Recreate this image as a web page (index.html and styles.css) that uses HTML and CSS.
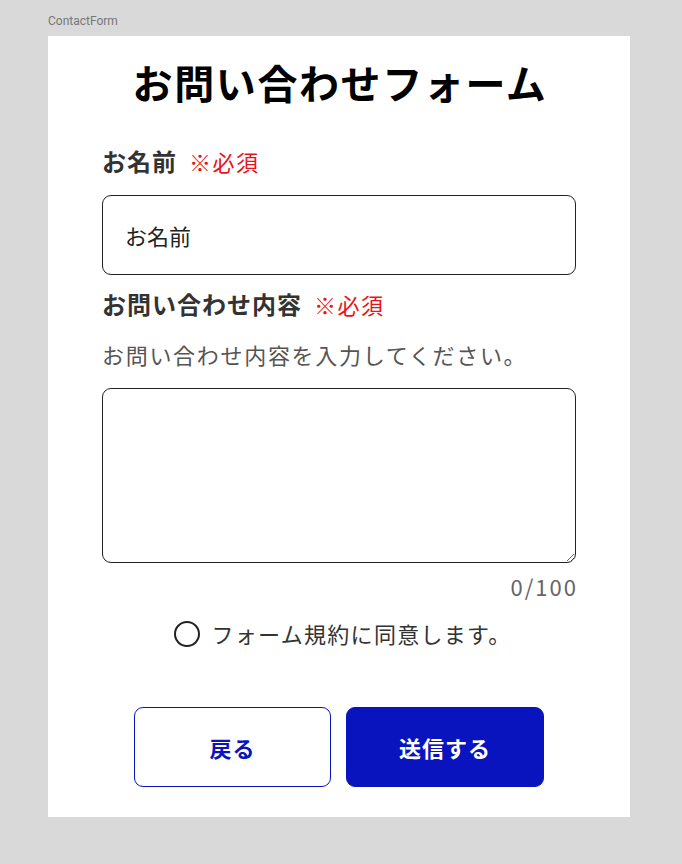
FILE: index.html
```html
<!DOCTYPE html>
<html lang="ja">
<head>
<meta charset="utf-8">
<link rel="stylesheet" href="styles.css">
</head>
<body>
<div class="frame-label">ContactForm</div>
<main class="card">
  <h1 class="title">お問い合わせフォーム</h1>
  <div class="field">
    <div class="label-row"><span class="label">お名前</span><span class="req">※必須</span></div>
    <input class="text-input" type="text" placeholder="お名前">
  </div>
  <div class="field field-2">
    <div class="label-row"><span class="label">お問い合わせ内容</span><span class="req">※必須</span></div>
    <p class="helper">お問い合わせ内容を入力してください。</p>
    <textarea class="textarea"></textarea>
    <div class="counter">0/100</div>
  </div>
  <label class="agree"><span class="radio"></span><span class="agree-text">フォーム規約に同意します。</span></label>
  <div class="buttons">
    <button class="btn btn-back" type="button">戻る</button>
    <button class="btn btn-submit" type="button">送信する</button>
  </div>
</main>
</body>
</html>
```
FILE: styles.css
```css
* { box-sizing: border-box; }
html, body { margin: 0; padding: 0; }
body {
  background: #d9d9d9;
  font-family: "Noto Sans CJK JP", "Noto Sans", sans-serif;
  padding: 14px 52px 40px 48px;
}
.frame-label {
  font-family: Roboto, "Noto Sans", sans-serif;
  font-size: 12px;
  line-height: 14px;
  color: #777;
  margin-bottom: 8px;
}
.card {
  background: #fff;
  width: 582px;
  padding: 18px 54px 30px;
  display: flex;
  flex-direction: column;
}
.title {
  margin: 0;
  font-size: 40px;
  line-height: 56px;
  font-weight: 700;
  color: #000;
  text-align: center;
  letter-spacing: 1.6px;
  padding-left: 2px;
}
.field { display: flex; flex-direction: column; margin-top: 34px; }
.field-2 { margin-top: 12px; }
.label-row { display: flex; align-items: center; gap: 12px; height: 34px; }
.label {
  font-size: 24px; line-height: 34px; font-weight: 700; color: #333; letter-spacing: 1px;
}
.req { font-size: 22px; line-height: 34px; color: #e8141c; letter-spacing: 1.5px; }
.text-input {
  margin-top: 17px;
  height: 80px;
  width: 100%;
  border: 1.5px solid #222;
  border-radius: 9px;
  padding: 0 22px;
  font-family: inherit;
  font-size: 22px;
  color: #222;
  outline: none;
}
.text-input::placeholder { color: #222; opacity: 1; }
.helper {
  margin: 18px 0 0;
  font-size: 22px; line-height: 31px; color: #555; letter-spacing: 1.7px;
}
.textarea {
  margin-top: 18px;
  height: 175px;
  width: 100%;
  border: 1.5px solid #222;
  border-radius: 9px;
  font-family: inherit;
  font-size: 22px;
  padding: 12px 22px;
  outline: none;
  display: block;
}
.counter {
  margin-top: 8px;
  margin-right: -2px;
  text-align: right;
  font-size: 22px; line-height: 31px; color: #666; letter-spacing: 2px;
}
.agree {
  margin-top: 16px;
  display: flex; align-items: center; justify-content: center; gap: 11px;
  padding-left: 8px;
}
.radio {
  width: 26px; height: 26px; border: 2px solid #222; border-radius: 50%;
  flex: none;
}
.agree-text { font-size: 22px; line-height: 31px; color: #333; letter-spacing: 1.3px; }
.buttons {
  margin-top: 58px;
  display: flex; justify-content: center; gap: 15px;
}
.btn {
  width: 197px; height: 80px;
  border-radius: 9px;
  font-family: inherit;
  font-size: 22px; font-weight: 700; letter-spacing: 1px;
  cursor: pointer;
}
.btn-back { background: #fff; border: 1.5px solid #0a14be; color: #0a14be; }
.btn-submit { background: #0a14be; border: 1.5px solid #0a14be; color: #fff; width: 198px; }
```
